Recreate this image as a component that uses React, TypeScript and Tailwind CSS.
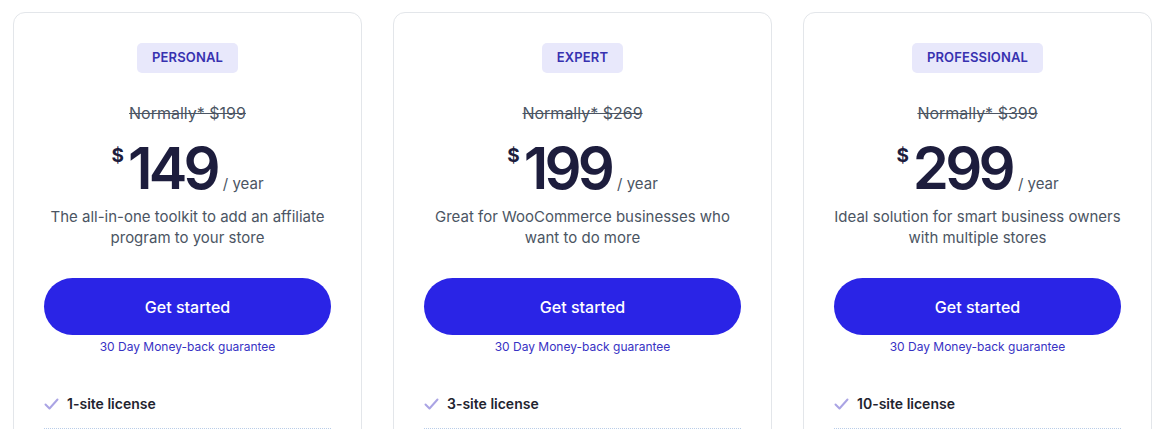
import React from "react";

interface Plan {
  name: string;
  normally: string;
  price: string;
  desc: string[];
  license: string;
  width: string;
}

const plans: Plan[] = [
  {
    name: "PERSONAL",
    normally: "Normally* $199",
    price: "149",
    desc: ["The all-in-one toolkit to add an affiliate", "program to your store"],
    license: "1-site license",
    width: "w-[349px]",
  },
  {
    name: "EXPERT",
    normally: "Normally* $269",
    price: "199",
    desc: ["Great for WooCommerce businesses who", "want to do more"],
    license: "3-site license",
    width: "w-[379px]",
  },
  {
    name: "PROFESSIONAL",
    normally: "Normally* $399",
    price: "299",
    desc: ["Ideal solution for smart business owners", "with multiple stores"],
    license: "10-site license",
    width: "w-[349px]",
  },
];

function Check() {
  return (
    <svg width="15" height="12" viewBox="0 0 15 12" fill="none">
      <path d="M1.5 6.5l4 4 8-9" stroke="#aaa4e4" strokeWidth="2" strokeLinecap="round" strokeLinejoin="round" />
    </svg>
  );
}

function PlanCard({ plan }: { plan: Plan }) {
  return (
    <div className={`${plan.width} shrink-0 h-[440px] rounded-xl border border-[#e3e6ea] bg-white px-[30px] pt-[30px] flex flex-col items-center`}>
      <div className="h-[30px] px-[15px] rounded-[5px] bg-[#e8e8fb] flex items-center text-[13px] font-semibold tracking-[0.01em] text-[#3731b0]">
        {plan.name}
      </div>
      <div className="mt-[28px] text-[16px] leading-6 text-[#4b5563] line-through decoration-[#4b5563]">
        {plan.normally}
      </div>
      <div className="mt-[14px] flex items-baseline">
        <span className="self-start text-[19px] font-bold leading-none mt-[7px] mr-[4px] text-[#1d1d3d]">$</span>
        <span className="text-[58px] font-semibold leading-none tracking-[-0.065em] text-[#1d1d3d]">{plan.price}</span>
        <span className="ml-[6px] text-[15px] leading-none text-[#4b5563]">/ year</span>
      </div>
      <div className="mt-[9px] text-center text-[15px] leading-[21px] text-[#4b5563]">
        {plan.desc.map((l) => (
          <div key={l}>{l}</div>
        ))}
      </div>
      <button className="mt-[30px] w-full h-[57px] rounded-full bg-[#2a24e6] text-white text-[16px] font-medium">
        Get started
      </button>
      <div className="mt-[4px] text-[12px] leading-[16px] text-[#3832c4]">30 Day Money-back guarantee</div>
      <div className="mt-[38px] w-full flex items-center gap-[8px] pb-[14px] border-b border-dotted border-[#b9cde8]">
        <Check />
        <span className="text-[14px] font-semibold text-[#1f2430]">{plan.license}</span>
      </div>
    </div>
  );
}

export default function App() {
  return (
    <div className="w-[1168px] h-[429px] overflow-hidden bg-white pl-[13px] pt-[12px] flex gap-[31px]" style={{ fontFamily: "Inter, 'Noto Sans', sans-serif" }}>
      {plans.map((p) => (
        <PlanCard key={p.name} plan={p} />
      ))}
    </div>
  );
}
